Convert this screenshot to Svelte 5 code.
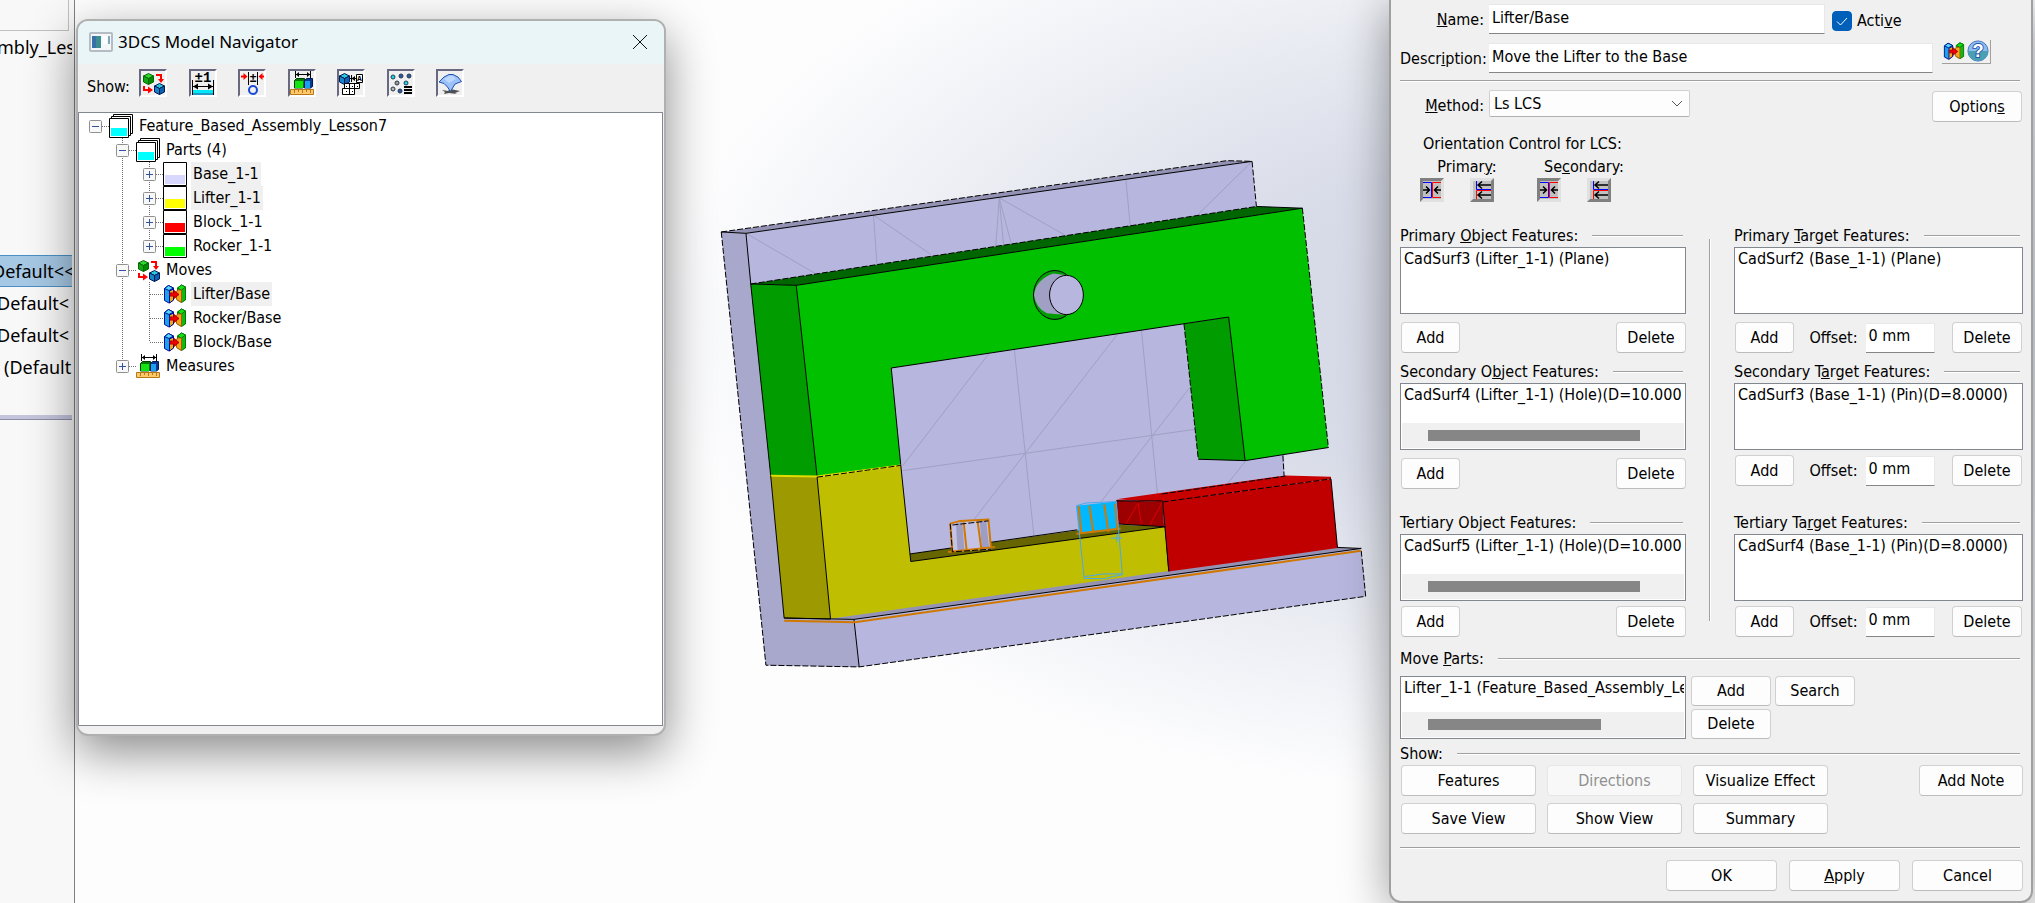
<script>
	const showButtons = ['moves', 'tolerances', 'gdt', 'measures', 'datums', 'points', 'surface'];

	// one entry per row: guide cells from left to right, then icon and label
	const tree = [
		{ cells: ['minus'], icon: 'stack', label: 'Feature_Based_Assembly_Lesson7' },
		{ cells: ['', 'minus-both'], icon: 'stack', label: 'Parts (4)' },
		{ cells: ['', 'both', 'plus-both'], icon: 'part', color: '#d8d8ff', label: 'Base_1-1', marked: true },
		{ cells: ['', 'both', 'plus-both'], icon: 'part', color: '#ffff00', label: 'Lifter_1-1', marked: true },
		{ cells: ['', 'both', 'plus-both'], icon: 'part', color: '#ff0000', label: 'Block_1-1' },
		{ cells: ['', 'both', 'plus-top'], icon: 'part', color: '#00ff00', label: 'Rocker_1-1' },
		{ cells: ['', 'minus-both'], icon: 'moves', label: 'Moves' },
		{ cells: ['', 'both', 'tee-both'], icon: 'move', label: 'Lifter/Base', marked: true },
		{ cells: ['', 'both', 'tee-both'], icon: 'move', label: 'Rocker/Base' },
		{ cells: ['', 'both', 'tee-top'], icon: 'move', label: 'Block/Base' },
		{ cells: ['', 'plus-top'], icon: 'measures', label: 'Measures' }
	];

	const features = [
		{
			object: ['Primary ', 'O', 'bject Features:'],
			objectItem: 'CadSurf3 (Lifter_1-1) (Plane)',
			target: ['Primary ', 'T', 'arget Features:'],
			targetItem: 'CadSurf2 (Base_1-1) (Plane)'
		},
		{
			object: ['Secondary O', 'b', 'ject Features:'],
			objectItem: 'CadSurf4 (Lifter_1-1) (Hole)(D=10.000',
			scroll: true,
			target: ['Secondary T', 'a', 'rget Features:'],
			targetItem: 'CadSurf3 (Base_1-1) (Pin)(D=8.0000)'
		},
		{
			object: ['Tertiary Ob', 'j', 'ect Features:'],
			objectItem: 'CadSurf5 (Lifter_1-1) (Hole)(D=10.000',
			scroll: true,
			target: ['Tertiary Ta', 'r', 'get Features:'],
			targetItem: 'CadSurf4 (Base_1-1) (Pin)(D=8.0000)'
		}
	];

	let name = $state('Lifter/Base');
	let description = $state('Move the Lifter to the Base');
	let active = $state(true);
	let method = $state('Ls LCS');
	let offsets = $state(['0 mm', '0 mm', '0 mm']);
</script>

{#snippet cube(x, y, top, left, right, line)}
	<g transform="translate({x} {y})" stroke={line} stroke-width="1" stroke-linejoin="round">
		<path d="M5.5 0.5 10.5 3 5.5 5.5 0.5 3z" fill={top} />
		<path d="M0.5 3 5.5 5.5V11.500L0.500 9z" fill={left} />
		<path d="M10.500 3 5.500 5.500V11.500L10.500 9z" fill={right} />
	</g>
{/snippet}

{#snippet icon(kind, color)}
	<svg class="icon" viewBox="0 0 24 24" aria-hidden="true">
		{#if kind === 'stack'}
			<g fill="#fff" stroke="#000">
				<path d="M4.500 0.500h19v19h-19z" />
				<path d="M2.500 2.500h19v19h-19z" />
				<path d="M0.500 4.500h19v19h-19z" />
			</g>
			<path d="M2 14h16v8H2z" fill="#00ffff" />
		{:else if kind === 'part'}
			<path d="M0.500 0.500h23v23h-23z" fill="#fff" stroke="#000" />
			<path d="M2 13h20v9H2z" fill={color} />
		{:else if kind === 'moves'}
			{@render cube(2, 2, '#35d435', '#11a811', '#008a00', '#046a04')}
			{@render cube(13, 12, '#28c8d8', '#1686c8', '#0b62b0', '#001858')}
			<path d="M15 4h5v5" fill="none" stroke="#f00" stroke-width="2" />
			<path d="M17 8h6l-3 4z" fill="#f00" />
			<path d="M3 15v4h5" fill="none" stroke="#f00" stroke-width="2" />
			<path d="M7 15.500v7l5-3.500z" fill="#f00" />
		{:else if kind === 'move'}
			<path d="M1.500 6.500 5.500 3.500 10.500 6V18L6 21 1.500 18.500z" fill="#1b9ff0" stroke="#001090" />
			<path d="M1.500 6.500 6 8.500 10.500 6 5.500 3.500z" fill="#4fd8ff" stroke="#001090" />
			<path d="M6.500 9 10.500 7V18L6.500 21z" fill="#f5a41b" stroke="#001090" />
			<path d="M14.500 6 18.500 3 22.500 5V18L18.500 20.500 14.500 18z" fill="#12b812" stroke="#067806" />
			<path d="M14.500 6 18.500 3 22.500 5 18.500 8z" fill="#14e414" stroke="#067806" />
			<path d="M14.500 8H18.500V20.500L13.500 17.500V10z" fill="#f5a41b" stroke="#a06000" />
			<path d="M7 11h4V8.500l5 4-5 4V14H7z" fill="#f00000" stroke="#b00000" />
		{:else if kind === 'tolerances'}
			<text x="12" y="11" text-anchor="middle" class="glyph wide">±1</text>
			<path d="M2 19h20v4H2z" fill="#00e8f8" />
			<path d="M2 22h20v2H2z" fill="#1f9cc8" />
			<path d="M1.500 9v15M22.500 9v15M2 15.500h20" stroke="#000" fill="none" />
			<path d="M2 15.500 7 12.500v6zM22 15.500 17 12.500v6z" />
		{:else if kind === 'gdt'}
			<path d="M8.500 1v13M17.500 1v13" stroke="#000" />
			<text x="13" y="11" text-anchor="middle" class="glyph">±</text>
			<path d="M1 5.500h3M22 5.500h2" stroke="#f00" stroke-width="2" />
			<path d="M3.500 2v7l4-3.500zM22.500 2v7l-4-3.500z" fill="#f00" />
			<circle cx="13" cy="19" r="4" fill="none" stroke="#1848d8" stroke-width="2" />
		{:else if kind === 'measures'}
			<path d="M5.500 0v7M20.500 0v7M6 3.500h14" stroke="#000" fill="none" />
			<path d="M6 3.500 9 1v5zM20 3.500 17 1v5z" />
			<path d="M4.500 9.500 6.500 7.500h8v8l-2 1.500h-8z" fill="#067806" stroke="#023c02" />
			<path d="M5 10h8v7H5z" fill="#14e414" />
			<path d="M14.500 9.500 16.500 7.500h6v8l-2 1.500h-6z" fill="#083890" stroke="#001858" />
			<path d="M15 10h5v7h-5z" fill="#1b9ff0" />
			<path d="M0.500 18.500h23v5h-23z" fill="#ffc86a" stroke="#b87818" />
			<path d="M4.500 19v3M8.500 19v2M12.500 19v3M16.500 19v2M20.500 19v3" stroke="#b87818" />
		{:else if kind === 'datums'}
			{@render cube(0, 2, '#28c8d8', '#1686c8', '#0b62b0', '#001858')}
			<path d="M11 7.500h6M12.500 4v7" stroke="#000" />
			<path d="M12.500 7.500 16 5v5z" />
			<path d="M17.500 3.500h6v8h-6zM5.500 12.500h15v5h-15zM3.500 17.500h12v6h-12zM10.500 12.500v11M15.500 12.500v5" fill="#fff" stroke="#000" />
			<text x="20.500" y="10" text-anchor="middle" class="glyph tiny">A</text>
			<path d="M7 15.500h1M13 15.500h1M18 15.500h1M7 20.500h1M13 20.500h1" stroke="#000" />
		{:else if kind === 'points'}
			<g stroke="#28384c" stroke-width="1">
				<circle cx="4" cy="6" r="2" fill="#10dce8" />
				<circle cx="12" cy="5" r="2" fill="#2858a8" />
				<circle cx="20" cy="5" r="2" fill="#2858a8" />
				<circle cx="8" cy="12" r="2" fill="#98a098" />
				<circle cx="17" cy="12" r="2" fill="#10dce8" />
				<circle cx="4" cy="18" r="2" fill="#b0b8b0" />
				<circle cx="11" cy="20" r="2" fill="#2858a8" />
			</g>
			<path d="M15 16h8M15 19h8M15 22h8" stroke="#000" stroke-width="2" />
		{:else if kind === 'surface'}
			<path d="M4 19l6 1 2-2 10 2-5 2 2 1-8-1-5 1 1-2z" fill="#505050" />
			<path d="M1 11 6 6 11 3.500H15L20 6 23.500 10.500 17 13 12.500 20.500 9.500 16 6 12.500z" fill="#9cc0f8" stroke="#2050b0" />
			<path d="M6 8 11 5H15L18 8 11 12z" fill="#bcd8ff" />
		{:else if kind === 'facing'}
			<path d="M3 4.500h8.500v15H3" stroke="#00f" fill="none" />
			<path d="M21 4.500h-8.500v15H21" stroke="#f00" fill="none" />
			<path d="M3 12h6M6 8.500 9.500 12 6 15.500M21 12h-6M18 8.500 14.500 12 18 15.500" stroke="#000" stroke-width="1.500" fill="none" />
		{:else if kind === 'aligned'}
			<path d="M6.500 3v8.500H21" stroke="#00f" fill="none" />
			<path d="M21 12.500H6.500V21" stroke="#f00" fill="none" />
			<path d="M21 7H8M12 3.500 8 7l4 3.500M21 17H8M12 13.500 8 17l4 3.500" stroke="#000" stroke-width="1.500" fill="none" />
		{:else if kind === 'help'}
			<circle cx="12" cy="12" r="11" fill="#8cbcf0" stroke="#4070c0" />
			<path d="M1 12h22a11 11 0 0 1-22 0z" fill="#48a0b0" />
			<text x="12" y="19" text-anchor="middle" class="help">?</text>
		{/if}
	</svg>
{/snippet}

{#snippet guide(kind)}
	<svg class="guide" viewBox="0 0 27 24" aria-hidden="true">
		<g stroke="#707070" stroke-dasharray="1 1" fill="none">
			{#if kind.endsWith('both')}
				<path d="M13.500 0v24" />
			{:else if kind.endsWith('top')}
				<path d="M13.500 0v12" />
			{/if}
			{#if kind !== '' && kind !== 'both'}
				<path d="M14 12.500h13" />
			{/if}
		</g>
		{#if kind.startsWith('plus') || kind.startsWith('minus')}
			<rect x="7.500" y="6.500" width="12" height="12" rx="1" fill="#f8f8f8" stroke="#909090" />
			<path d="M10 12.500h7" stroke="#3050a0" />
			{#if kind.startsWith('plus')}
				<path d="M13.500 9v7" stroke="#3050a0" />
			{/if}
		{/if}
	</svg>
{/snippet}

{#snippet heading(parts)}
	<div class="heading">
		<span>{parts[0]}<u>{parts[1]}</u>{parts[2]}</span>
		<hr />
	</div>
{/snippet}

{#snippet listbox(item, label, thumb)}
	<div class="listbox" role="listbox" aria-label={label} tabindex="0">
		<div class="item" role="option" aria-selected="false">{item}</div>
		{#if thumb}
			<div class="scroll"><div class="thumb" style="width: {thumb}px"></div></div>
		{/if}
	</div>
{/snippet}

<div class="desktop">
	<aside class="manager">
		<div class="tabs"></div>
		<div class="config title">mbly_Les</div>
		<div class="config chosen">Default&lt;&lt;</div>
		<div class="config">Default&lt;</div>
		<div class="config">Default&lt;</div>
		<div class="config last">(Default</div>
		<div class="splitter"></div>
	</aside>

	<main class="viewport">
		<svg class="model" viewBox="0 0 1568 1568" preserveAspectRatio="none" role="img" aria-label="Assembly model">
			<!-- base plate -->
			<path d="M49 267 106 271 1273 62 1283 193 1347 920V1186L1524 1186 1535 1325 367 1530 152 1525z" fill="#b7b6de" />
			<path d="M49 267 106 271 195 1388 355 1392 367 1530 152 1525z" fill="#a8a7cc" />
			<path d="M49 267 1215 60 1273 62 106 271z" fill="#9392b4" />
			<path class="mesh" d="M106 271 265 387M400 218 408 360M400 218 533 333M690 168 840 275M690 168 682 310M690 168 700 305M690 168 718 303M982 114 992 248M1273 62 1148 217M725 610 770 1150M1018 552 1055 1030M468 960 1142 840M468 945 665 622M630 1105 965 560M925 1050 1130 718M1215 1000 1257 934" />
			<path class="edge" d="M106 271 1273 62M106 271 117 418M49 267 106 271" />
			<path class="edge dash" d="M49 267 1215 60 1273 62 1283 193M49 267 152 1525 367 1530 1535 1325 1524 1184M1344 916 1347 978" />
			<!-- rocker -->
			<path d="M117 418 1283 193 1389 198 222 422z" fill="#006600" />
			<path d="M117 418 222 422 270 977 163 975z" fill="#009c00" />
			<path d="M222 422 1389 198 1449 893 1257 931 1219 514 441 662 463 945 270 977z" fill="#00c000" />
			<path d="M1116 534 1219 514 1257 931 1149 927z" fill="#009c00" />
			<path class="edge" d="M117 418 222 422 1389 198 1283 193M222 422 270 977M463 945 441 662 1219 514 1257 931 1449 893M1149 927 1257 931M117 418 163 975" />
			<path class="edge dash" d="M117 418 1283 193M1389 198 1449 893M1116 534 1149 927" />
			<!-- locating pin through the rocker -->
			<ellipse cx="818" cy="450" rx="49" ry="71" fill="#009c00" stroke="#000" vector-effect="non-scaling-stroke" />
			<path d="M845 393 815 388Q775 405 770 450 775 490 800 503L845 508z" fill="#a09fc4" />
			<ellipse cx="845" cy="450" rx="39" ry="57" fill="#b7b6de" stroke="#000" vector-effect="non-scaling-stroke" />
			<!-- lifter -->
			<path d="M163 975 270 979 301 1391 194 1388z" fill="#9c9a00" />
			<path d="M270 979 463 945 486 1224 1073 1123 1081 1253 301 1391z" fill="#c0be00" />
			<path d="M484 1202 965 1117 1073 1123 486 1224z" fill="#666500" />
			<path d="M163 975 270 977 463 945" fill="none" stroke="#e0dc00" stroke-width="2" vector-effect="non-scaling-stroke" />
			<path class="edge" d="M270 979 301 1391M463 945 486 1224 1073 1123 1081 1253M163 975 194 1388 301 1391M484 1202 870 1132" />
			<path class="edge dash" d="M270 979 463 945" />
			<!-- ledge of the base -->
			<path d="M301 1390 1470 1183 1524 1186 355 1392z" fill="#9392b4" />
			<!-- block -->
			<path d="M960 1043 1350 974 1455 978V984L1067 1052z" fill="#c80000" />
			<path d="M960 1045 1067 1051 1070 1123 965 1115z" fill="#9c0000" />
			<path d="M1067 1051 1455 984 1470 1185 1081 1253z" fill="#c00000" />
			<path d="M982 1115 1010 1055 1018 1115M1038 1116 1065 1055" fill="none" stroke="#e00000" vector-effect="non-scaling-stroke" />
			<path class="edge" d="M1067 1051 1081 1253M1455 984 1470 1185M960 1048H1067M965 1115 1073 1123" />
			<path class="edge dash" d="M1067 1051 1455 984M1065 1028 1350 976" />
			<path class="edge" d="M194 1388 355 1392 1524 1186 1470 1183M355 1392 367 1530" />
			<path d="M194 1396 357 1400 1524 1193" fill="none" stroke="#d07800" stroke-width="2" vector-effect="non-scaling-stroke" />
			<!-- pins -->
			<path d="M577 1112 665 1103 671 1188 582 1196z" fill="#c4c3e6" />
			<path d="M590 1112 605 1110 610 1194 594 1196zM645 1106 660 1104 667 1188 650 1190z" fill="#9e9dc4" />
			<path class="orange" d="M577 1114 600 1106 665 1102 671 1186M577 1114 582 1196M608 1110 615 1194M640 1106 649 1190M572 1196 680 1182" />
			<path class="edge dash" d="M582 1118 665 1106M577 1114 582 1196 671 1188" />
			<path d="M868 1062 960 1050 965 1132 875 1143z" fill="#00b8ff" />
			<path class="orange" d="M873 1062 879 1140M898 1062 907 1140M932 1058 942 1138M958 1056 962 1132M868 1143 970 1128" />
			<path class="pick" d="M868 1062 890 1054 960 1050 965 1132M868 1062 886 1273 930 1274 974 1262 965 1132M886 1268 930 1260 974 1260M948 1156H973M961 1143V1168" />
		</svg>
	</main>

	<section class="navigator">
		<header>
			<svg class="app" viewBox="0 0 24 20" aria-hidden="true">
				<rect x="1" y="1" width="22" height="18" rx="1" fill="#f4f6f8" stroke="#b4bcc4" stroke-width="2" />
				<path d="M3 4h9v12H3z" fill="#3c8c90" />
				<path d="M3 4h4v12H3z" fill="#3870a8" />
				<path d="M14 4h4v8h-4z" fill="#fff" />
				<path d="M19 4h2v8h-2z" fill="#80a8c0" />
			</svg>
			<h1>3DCS Model Navigator</h1>
			<button class="close" aria-label="Close">
				<svg viewBox="0 0 16 16" aria-hidden="true"><path d="M1 1 15 15M15 1 1 15" stroke="#111" fill="none" /></svg>
			</button>
		</header>
		<div class="toolbar">
			<span>Show:</span>
			<div class="tools">
				{#each showButtons as kind}
					<button class="tool" aria-label={kind}>{@render icon(kind)}</button>
				{/each}
			</div>
		</div>
		<ul class="tree">
			{#each tree as row}
				<li>
					{#each row.cells as cell}{@render guide(cell)}{/each}
					{@render icon(row.icon, row.color)}
					<span class:marked={row.marked}>{row.label}</span>
				</li>
			{/each}
		</ul>
	</section>

	<form class="dialog" onsubmit={(e) => e.preventDefault()}>
		<div class="row name">
			<label class="caption" for="name"><u>N</u>ame:</label>
			<input id="name" type="text" bind:value={name} />
			<label class="check">
				<span class="box">
					<input type="checkbox" bind:checked={active} />
					{#if active}
						<svg viewBox="0 0 20 20" aria-hidden="true"><path d="M5 10.500 8.500 14 15 7" stroke="#fff" fill="none" /></svg>
					{/if}
				</span>
				<span>Acti<u>v</u>e</span>
			</label>
		</div>
		<div class="row description">
			<label class="caption" for="description">Descr<u>i</u>ption:</label>
			<input id="description" type="text" bind:value={description} />
			<div class="badges">
				{@render icon('move')}
				{@render icon('help')}
			</div>
		</div>
		<hr class="rule" />
		<div class="row method">
			<label class="caption" for="method"><u>M</u>ethod:</label>
			<div class="picker">
				<select id="method" bind:value={method}>
					<option>Ls LCS</option>
				</select>
				<svg viewBox="0 0 12 8" aria-hidden="true"><path d="M1 1 6 6 11 1" stroke="#555" fill="none" /></svg>
			</div>
			<button class="btn options">Option<u>s</u></button>
		</div>
		<div class="orientation">
			<p>Orientation Control for LCS:</p>
			<div class="pairs">
				<div class="pair">
					<span>Primar<u>y</u>:</span>
					<div>
						<button class="bevel pressed" aria-label="Primary facing">{@render icon('facing')}</button>
						<button class="bevel" aria-label="Primary aligned">{@render icon('aligned')}</button>
					</div>
				</div>
				<div class="pair">
					<span>Se<u>c</u>ondary:</span>
					<div>
						<button class="bevel pressed" aria-label="Secondary facing">{@render icon('facing')}</button>
						<button class="bevel" aria-label="Secondary aligned">{@render icon('aligned')}</button>
					</div>
				</div>
			</div>
		</div>

		<div class="features">
			<div class="divider"></div>
			{#each features as f, i}
				<div class="object">
					{@render heading(f.object)}
					{@render listbox(f.objectItem, f.object.join(''), f.scroll ? 212 : 0)}
					<div class="actions" class:near={i === 2}>
						<button class="btn add">Add</button>
						<button class="btn delete">Delete</button>
					</div>
				</div>
				<div class="target">
					{@render heading(f.target)}
					{@render listbox(f.targetItem, f.target.join(''), 0)}
					<div class="actions" class:near={i > 0}>
						<button class="btn add">Add</button>
						<label class="offset">Offset: <input type="text" bind:value={offsets[i]} /></label>
						<button class="btn delete">Delete</button>
					</div>
				</div>
			{/each}
		</div>

		<div class="parts">
			{@render heading(['Move ', 'P', 'arts:'])}
			<div class="partsrow">
				{@render listbox('Lifter_1-1 (Feature_Based_Assembly_Le', 'Move parts', 173)}
				<div class="partsbuttons">
					<button class="btn">Add</button>
					<button class="btn">Search</button>
					<button class="btn">Delete</button>
				</div>
			</div>
		</div>

		<div class="show">
			{@render heading(['Show:', '', ''])}
			<div class="views">
				<button class="btn">Features</button>
				<button class="btn" disabled>Directions</button>
				<button class="btn">Visualize Effect</button>
				<button class="btn note">Add Note</button>
				<button class="btn">Save View</button>
				<button class="btn">Show View</button>
				<button class="btn">Summary</button>
			</div>
		</div>
		<hr class="rule bottom" />
		<footer>
			<button class="btn">OK</button>
			<button class="btn"><u>A</u>pply</button>
			<button class="btn">Cancel</button>
		</footer>
	</form>
</div>

<style>
	:global(body) {
		margin: 0;
		overflow: hidden;
	}

	.desktop {
		position: relative;
		display: grid;
		grid-template-columns: 74px 1fr;
		min-height: 100vh;
		overflow: hidden;
		background: #f8f8f8;
		font: 16px/20px "DejaVu Sans Condensed", "Noto Sans", sans-serif;
		color: #000;
	}

	.desktop * {
		box-sizing: border-box;
	}

	button,
	input,
	select {
		font: inherit;
		color: inherit;
		margin: 0;
	}

	p,
	h1,
	ul {
		margin: 0;
		padding: 0;
		font-weight: normal;
	}

	hr {
		margin: 0;
		border: 0;
		height: 2px;
		background: linear-gradient(#a0a0a0 50%, #fff 50%);
	}

	.icon {
		display: block;
		flex: none;
		width: 24px;
		height: 24px;
	}

	.glyph {
		font: bold 12px/12px "Liberation Mono", monospace;
	}

	.wide {
		font-size: 14px;
	}

	.tiny {
		font-size: 8px;
	}

	.help {
		font: bold 20px/20px "Liberation Sans", sans-serif;
		fill: #fff;
		stroke: #2858a8;
		stroke-width: 2;
		paint-order: stroke;
	}

	/* strip of the configuration manager left of the viewport */
	.manager {
		overflow: hidden;
		padding-right: 2px;
		font: 18px/32px "Noto Sans", sans-serif;
	}

	.tabs {
		height: 31px;
		margin-right: 3px;
		border: solid #c0c0c0;
		border-width: 0 1px 1px 0;
	}

	.config {
		height: 32px;
		white-space: nowrap;
		overflow: hidden;
		text-indent: -3px;
	}

	.title {
		margin-bottom: 192px;
	}

	.chosen {
		background: #a6c8e4;
		border: solid #4a90c4;
		border-width: 1px 0;
		line-height: 30px;
		text-indent: -8px;
	}

	.last {
		text-indent: 4px;
	}

	.splitter {
		margin-top: 32px;
		height: 5px;
		background: #c4c4dc;
		border-bottom: 1px solid #8c8ca4;
	}

	.viewport {
		border-left: 1px solid #808080;
		background:
			radial-gradient(ellipse 44% 52% at 74% 36%, #d4d8e4 0%, #d8dce8 35%, rgba(255, 255, 255, 0) 100%),
			#fdfdfe;
	}

	.model {
		display: block;
		width: 680px;
		height: 540px;
		margin: 140px 0 0 625px;
	}

	.edge {
		fill: none;
		stroke: #000;
		vector-effect: non-scaling-stroke;
	}

	.dash {
		stroke-dasharray: 6 2;
	}

	.mesh {
		fill: none;
		stroke: #a09fc4;
		vector-effect: non-scaling-stroke;
	}

	.orange {
		fill: none;
		stroke: #d07800;
		stroke-width: 2;
		vector-effect: non-scaling-stroke;
	}

	.pick {
		fill: none;
		stroke: #48a8f0;
		vector-effect: non-scaling-stroke;
	}

	/* floating windows */
	.navigator {
		position: absolute;
		left: 76px;
		top: 19px;
		width: 590px;
		border: 2px solid #b0b0b0;
		border-radius: 12px;
		background: #f0f0f0;
		box-shadow: 0 16px 48px rgba(0, 0, 0, 0.45);
		overflow: hidden;
	}

	.navigator header {
		display: flex;
		align-items: center;
		height: 43px;
		padding: 0 16px 2px 11px;
		background: #eaf5f8;
	}

	.app {
		width: 24px;
		height: 20px;
	}

	h1 {
		flex: 1;
		margin-left: 5px;
		font: 17px/24px "Noto Sans", sans-serif;
	}

	.close {
		display: grid;
		padding: 0;
		border: 0;
		background: none;
	}

	.close svg {
		width: 16px;
		height: 16px;
	}

	.toolbar {
		display: flex;
		height: 48px;
		padding: 5px 0 0 9px;
	}

	.toolbar span {
		width: 52px;
		padding-top: 8px;
	}

	.tools {
		display: flex;
		justify-content: space-between;
		width: 325px;
	}

	.tool {
		width: 28px;
		height: 28px;
		padding: 0;
		border: 2px solid;
		border-color: #686880 #fff #fff #686880;
		background: #f0f0f0;
	}

	.tree {
		height: 614px;
		margin: 0 1px 8px 0;
		padding: 1px 0 0 3px;
		border: 1px solid #828790;
		background: #fff;
		list-style: none;
	}

	.tree li {
		display: flex;
		height: 24px;
		line-height: 24px;
	}

	.guide {
		flex: none;
		width: 27px;
		height: 24px;
	}

	.tree span {
		margin-left: 4px;
		padding: 0 2px;
	}

	.marked {
		background: #f0f0f0;
	}

	.dialog {
		position: absolute;
		top: 0;
		right: 2px;
		width: 644px;
		padding: 4px 8px 10px 9px;
		border: solid #a0a0a0;
		border-width: 0 2px 2px;
		border-radius: 0 0 12px 12px;
		background: #f0f0f0;
		box-shadow: 0 8px 48px rgba(0, 0, 0, 0.4);
	}

	.row {
		display: flex;
	}

	.caption {
		width: 84px;
		margin-right: 5px;
		padding-top: 6px;
		text-align: right;
	}

	input[type="text"] {
		height: 30px;
		padding: 0 3px 4px;
		border: solid #e8e8e8;
		border-width: 1px 1px 1px 0;
		border-bottom-color: #868686;
		background: #fff;
	}

	.name > input {
		width: 336px;
	}

	.check {
		display: flex;
		align-items: center;
		gap: 5px;
		margin-left: 7px;
		padding-top: 3px;
	}

	.box {
		display: grid;
	}

	.box input,
	.box svg {
		grid-area: 1 / 1;
		width: 20px;
		height: 20px;
		pointer-events: none;
	}

	.box input {
		appearance: none;
		border: 1px solid #868686;
		border-radius: 4px;
		background: #fff;
		pointer-events: auto;
	}

	.box input:checked {
		border-color: #005fb8;
		background: #005fb8;
	}

	.description {
		margin: 9px 0 7px;
	}

	.description > input {
		width: 444px;
	}

	.badges {
		display: flex;
		gap: 2px;
		margin: -3px 0 0 9px;
		height: 24px;
		padding: 0 1px;
		border: solid #a0a0a0;
		border-width: 0 1px 1px 0;
	}

	.badges .icon {
		width: 22px;
		height: 22px;
	}

	.rule {
		margin-right: 3px;
	}

	.method {
		margin-top: 8px;
		height: 32px;
	}

	.picker {
		position: relative;
		width: 201px;
	}

	select {
		width: 201px;
		height: 27px;
		padding: 0 4px;
		border: 1px solid #d0d0d0;
		border-bottom-color: #b0b0b0;
		border-radius: 2px;
		background: #fdfdfd;
		appearance: none;
	}

	.picker svg {
		position: absolute;
		right: 7px;
		top: 10px;
		width: 12px;
		height: 8px;
	}

	.btn {
		height: 31px;
		padding: 0;
		border: 1px solid #d0d0d0;
		border-bottom-color: #bcbcbc;
		border-radius: 4px;
		background: #fdfdfd;
		text-align: center;
	}

	.btn:disabled {
		border-color: #e6e6e6;
		background: #f8f8f8;
		color: #909090;
	}

	.options {
		width: 90px;
		margin: 1px 1px 0 auto;
	}

	.orientation {
		margin-top: 12px;
		padding-left: 20px;
	}

	.orientation p {
		padding-left: 3px;
	}

	.pairs {
		display: flex;
		gap: 43px;
		margin-top: 3px;
	}

	.pair {
		width: 74px;
	}

	.pair span {
		display: block;
		width: 94px;
		text-align: center;
	}

	.pair div {
		display: flex;
		gap: 26px;
		margin-top: 1px;
	}

	.bevel {
		width: 24px;
		height: 24px;
		padding: 0;
		border: 3px solid;
		border-color: #e0e0e0 #808080 #808080 #e0e0e0;
		background: #c0c0c0;
	}

	.bevel .icon {
		margin: -3px;
	}

	.pressed {
		border-color: #808080 #e0e0e0 #e0e0e0 #808080;
	}

	.features {
		display: grid;
		grid-template-columns: 286fr 48px 289fr;
		grid-template-rows: 136px 151px 126px;
		margin-top: 23px;
	}

	.divider {
		grid-area: 1 / 2 / 4 / 3;
		justify-self: center;
		width: 2px;
		margin: 14px 0 17px;
		background: linear-gradient(90deg, #a0a0a0 50%, #fff 50%);
	}

	.object {
		grid-column: 1;
		min-width: 0;
	}

	.target {
		grid-column: 3;
		min-width: 0;
	}

	.heading {
		display: flex;
		align-items: center;
		gap: 14px;
		padding: 1px 3px 0 0;
		white-space: nowrap;
	}

	.heading hr {
		flex: 1;
	}

	.listbox {
		display: flex;
		flex-direction: column;
		height: 67px;
		margin-top: 1px;
		padding: 1px;
		border: 1px solid #828790;
		background: #fff;
		overflow: hidden;
	}

	.item {
		flex: 1;
		padding-left: 2px;
		white-space: nowrap;
		overflow: hidden;
	}

	.scroll {
		height: 25px;
		padding: 7px 26px;
		background: #f0f0f0;
	}

	.thumb {
		height: 11px;
		background: #868686;
	}

	.actions {
		display: flex;
		justify-content: space-between;
		margin: 8px 0 0 1px;
	}

	.near {
		margin-top: 5px;
	}

	.target .actions {
		margin-right: 1px;
	}

	.add {
		width: 59px;
	}

	.delete {
		width: 70px;
	}

	.offset {
		display: flex;
		align-items: center;
		gap: 8px;
		margin-right: 2px;
	}

	.offset input {
		width: 69px;
	}

	.parts {
		margin-top: 10px;
	}

	.partsrow {
		display: flex;
		gap: 5px;
		margin-top: 7px;
	}

	.partsrow .listbox {
		width: 286px;
		height: 63px;
		margin: 0;
	}

	.partsbuttons {
		display: grid;
		grid-template-columns: 80px 80px;
		gap: 2px 4px;
	}

	.partsbuttons .btn {
		height: 30px;
	}

	.show {
		margin-top: 4px;
	}

	.views {
		display: grid;
		grid-template-columns: 135px 135px 135px 1fr;
		gap: 7px 11px;
		margin-top: 1px;
		padding-left: 1px;
	}

	.note {
		justify-self: end;
		width: 104px;
	}

	.bottom {
		margin-top: 13px;
	}

	footer {
		display: flex;
		justify-content: flex-end;
		gap: 12px;
		margin-top: 11px;
	}

	footer .btn {
		width: 111px;
	}
</style>
